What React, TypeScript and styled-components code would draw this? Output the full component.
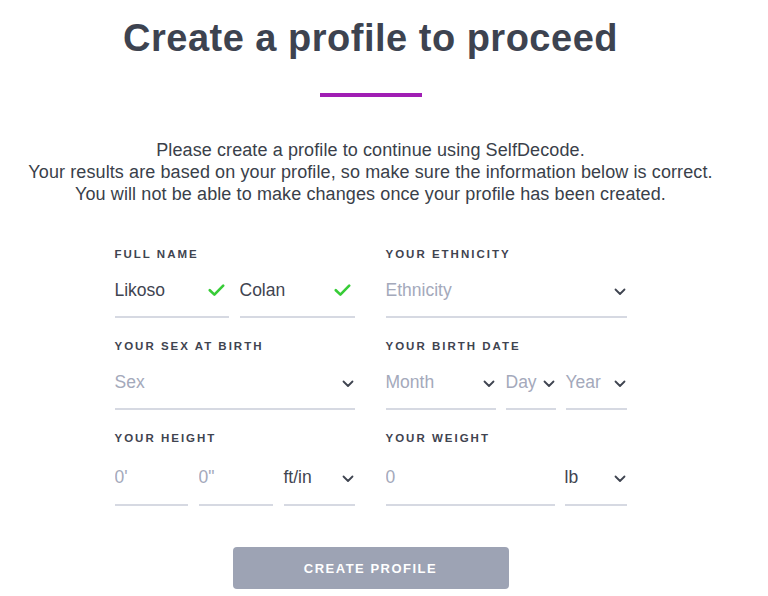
import React from "react";
import styled, { createGlobalStyle } from "styled-components";

const Global = createGlobalStyle`
  html, body { margin: 0; padding: 0; background: #ffffff; }
  body { font-family: "Liberation Sans", Arial, sans-serif; color: #3f4450; }
  * { box-sizing: border-box; }
`;

const Page = styled.main`
  width: 741px;
  padding-top: 15px;
  display: flex;
  flex-direction: column;
  align-items: center;
`;

const Title = styled.h1`
  margin: 0;
  font-size: 38px;
  line-height: 46px;
  font-weight: 700;
  letter-spacing: 0.5px;
  color: #3d4350;
`;

const Accent = styled.div`
  width: 102px;
  height: 4px;
  margin-top: 32px;
  background: #a01eb4;
`;

const Intro = styled.p`
  margin: 42px 0 0;
  font-size: 18px;
  line-height: 22px;
  letter-spacing: 0.1px;
  text-align: center;
  color: #3a3f4a;
`;

const Form = styled.form`
  width: 512px;
  margin-top: 42px;
  display: grid;
  grid-template-columns: 240px 241px;
  column-gap: 31px;
  row-gap: 21px;
`;

const Group = styled.div`
  display: flex;
  flex-direction: column;
`;

const Label = styled.label<{ $tall?: boolean }>`
  display: block;
  font-size: 11.5px;
  line-height: 14px;
  font-weight: 700;
  letter-spacing: 2px;
  text-transform: uppercase;
  color: #3f4450;
  margin-bottom: ${(p) => (p.$tall ? 22 : 19)}px;
`;

const Row = styled.div<{ $gap: number }>`
  display: flex;
  gap: ${(p) => p.$gap}px;
`;

const Field = styled.div<{ $w?: number; $tall?: boolean }>`
  flex: ${(p) => (p.$w ? `0 0 ${p.$w}px` : "1 1 auto")};
  min-width: 0;
  display: flex;
  align-items: center;
  justify-content: space-between;
  padding-bottom: ${(p) => (p.$tall ? 17 : 16)}px;
  border-bottom: 2px solid #d6d9e2;
`;

const TextInput = styled.input`
  flex: 1 1 auto;
  min-width: 0;
  height: 20px;
  padding: 0;
  border: none;
  outline: none;
  background: transparent;
  font-family: inherit;
  font-size: 17.5px;
  line-height: 20px;
  color: #3f4450;
  &::placeholder { color: #a4a9bb; opacity: 1; }
`;

const SelectText = styled.span<{ $placeholder?: boolean }>`
  font-size: 17.5px;
  line-height: 20px;
  white-space: nowrap;
  color: ${(p) => (p.$placeholder ? "#a4a9bb" : "#3f4450")};
`;

const CheckIcon = styled.svg`
  flex: 0 0 auto;
  margin-right: 4px;
`;

const ChevronIcon = styled.svg`
  flex: 0 0 auto;
  margin-right: 1px;
  margin-top: 3px;
`;

const Button = styled.button`
  width: 276px;
  height: 42px;
  margin-top: 41px;
  border: none;
  border-radius: 4px;
  background: #9da3b4;
  color: #ffffff;
  font-family: inherit;
  font-size: 13px;
  font-weight: 700;
  letter-spacing: 1.5px;
  text-transform: uppercase;
  cursor: pointer;
`;

const Check = () => (
  <CheckIcon width="17" height="14" viewBox="0 0 17 14" aria-hidden>
    <polyline
      points="1.8,7.2 6.4,11.6 15.2,2.6"
      fill="none"
      stroke="#37cc37"
      strokeWidth="2.6"
      strokeLinecap="round"
      strokeLinejoin="round"
    />
  </CheckIcon>
);

const Chevron = () => (
  <ChevronIcon width="12" height="8" viewBox="0 0 12 8" aria-hidden>
    <polyline
      points="1.5,1.5 6,6 10.5,1.5"
      fill="none"
      stroke="#3f4450"
      strokeWidth="1.8"
      strokeLinecap="round"
      strokeLinejoin="round"
    />
  </ChevronIcon>
);

type SelectProps = { value: string; placeholder?: boolean; w?: number; tall?: boolean };
const Select = ({ value, placeholder, w, tall }: SelectProps) => (
  <Field $w={w} $tall={tall} role="combobox">
    <SelectText $placeholder={placeholder}>{value}</SelectText>
    <Chevron />
  </Field>
);

export default function App() {
  return (
    <>
      <Global />
      <Page>
        <Title>Create a profile to proceed</Title>
        <Accent />
        <Intro>
          Please create a profile to continue using SelfDecode.
          <br />
          Your results are based on your profile, so make sure the information below is correct.
          <br />
          You will not be able to make changes once your profile has been created.
        </Intro>
        <Form onSubmit={(e) => e.preventDefault()}>
          <Group>
            <Label>Full name</Label>
            <Row $gap={11}>
              <Field $w={114}>
                <TextInput defaultValue="Likoso" placeholder="First name" />
                <Check />
              </Field>
              <Field $w={115}>
                <TextInput defaultValue="Colan" placeholder="Last name" />
                <Check />
              </Field>
            </Row>
          </Group>
          <Group>
            <Label>Your ethnicity</Label>
            <Row $gap={10}>
              <Select value="Ethnicity" placeholder />
            </Row>
          </Group>
          <Group>
            <Label>Your sex at birth</Label>
            <Row $gap={10}>
              <Select value="Sex" placeholder />
            </Row>
          </Group>
          <Group>
            <Label>Your birth date</Label>
            <Row $gap={10}>
              <Select value="Month" placeholder w={110} />
              <Select value="Day" placeholder w={50} />
              <Select value="Year" placeholder w={61} />
            </Row>
          </Group>
          <Group>
            <Label $tall>Your height</Label>
            <Row $gap={11}>
              <Field $w={73} $tall>
                <TextInput placeholder="0'" />
              </Field>
              <Field $w={74} $tall>
                <TextInput placeholder={'0"'} />
              </Field>
              <Select value="ft/in" w={71} tall />
            </Row>
          </Group>
          <Group>
            <Label $tall>Your weight</Label>
            <Row $gap={10}>
              <Field $w={169} $tall>
                <TextInput placeholder="0" />
              </Field>
              <Select value="lb" w={62} tall />
            </Row>
          </Group>
        </Form>
        <Button type="submit">Create profile</Button>
      </Page>
    </>
  );
}
